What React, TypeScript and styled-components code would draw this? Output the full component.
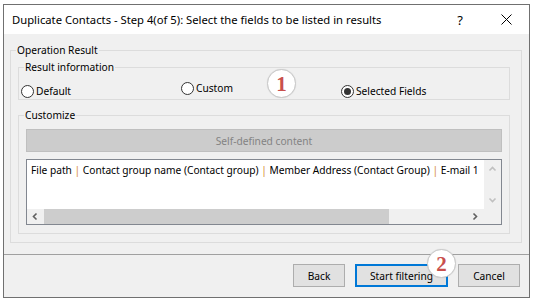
import React from "react";
import styled, { createGlobalStyle } from "styled-components";

const Global = createGlobalStyle`
  html, body { margin: 0; padding: 0; background: #ffffff; }
  body { font-family: "Noto Sans", "Liberation Sans", sans-serif; font-size: 10.2px; color: #000; }
  * { box-sizing: border-box; }
`;

const Window = styled.div`
  position: relative;
  margin: 4px 0 0 3px;
  width: 527px;
  height: 294px;
  border: 1px solid #707070;
  background: #f0f0f0;
  display: flex;
  flex-direction: column;
`;

const TitleBar = styled.div`
  height: 29px;
  background: #ffffff;
  display: flex;
  align-items: center;
  padding-left: 8px;
  flex: none;
`;

const Title = styled.div`
  flex: 1;
  font-size: 11.25px;
  line-height: 16px;
  white-space: nowrap;
`;

const CaptionButton = styled.div`
  width: 46px;
  height: 29px;
  display: flex;
  align-items: center;
  justify-content: center;
  font-size: 13px;
  color: #000;
`;

const Body = styled.div`
  flex: 1;
  padding: 8px 7px 11px 6px;
  display: flex;
  flex-direction: column;
`;

const Group = styled.fieldset<{ $pad: string; $gap?: number }>`
  margin: 0 0 ${(p) => p.$gap || 0}px 0;
  min-width: 0;
  border: 1px solid #dcdcdc;
  padding: ${(p) => p.$pad};
  display: flex;
  flex-direction: column;
`;

const Legend = styled.legend<{ $offset: number }>`
  padding: 0 1px;
  margin-left: ${(p) => p.$offset}px;
  line-height: 16px;
  color: #000;
`;

const RadioRow = styled.div`
  display: grid;
  grid-template-columns: repeat(3, 160px);
  padding: 8px 0 0 1px;
  height: 24px;
`;

const RadioOption = styled.div<{ $raise?: number }>`
  display: flex;
  align-items: center;
  gap: 2px;
  height: 16px;
  margin-top: ${(p) => -(p.$raise || 0)}px;
  white-space: nowrap;
`;

const RadioCircle = styled.span<{ $checked?: boolean }>`
  width: 13px;
  height: 13px;
  border-radius: 50%;
  border: 1px solid #333333;
  background: #ffffff;
  display: flex;
  align-items: center;
  justify-content: center;
  &::after {
    content: "";
    width: 7px;
    height: 7px;
    border-radius: 50%;
    background: #333333;
    display: ${(p) => (p.$checked ? "block" : "none")};
  }
`;

const SelfButton = styled.div`
  height: 23px;
  background: #cccccc;
  border: 1px solid #bfbfbf;
  color: #838383;
  display: flex;
  align-items: center;
  justify-content: center;
  margin-bottom: 7px;
`;

const ListBox = styled.div`
  height: 66px;
  border: 1px solid #828790;
  display: grid;
  grid-template-columns: 1fr 17px;
  grid-template-rows: 1fr 15px;
  background: #f0f0f0;
`;

const ListText = styled.div`
  background: #ffffff;
  padding: 2px 0 0 4px;
  white-space: nowrap;
  overflow: hidden;
  line-height: 16px;
`;

const Sep = styled.span`
  color: #d4862a;
`;

const VScroll = styled.div`
  display: flex;
  flex-direction: column;
  justify-content: space-between;
  align-items: center;
  padding: 5px 0 4px;
`;

const HScroll = styled.div`
  display: flex;
  align-items: center;
`;

const ArrowBox = styled.div<{ $w: number }>`
  width: ${(p) => p.$w}px;
  height: 15px;
  display: flex;
  align-items: center;
  justify-content: center;
  flex: none;
`;

const Track = styled.div`
  flex: 1;
  height: 15px;
  display: flex;
  align-items: center;
`;

const Thumb = styled.div`
  height: 15px;
  background: #cdcdcd;
`;

const Corner = styled.div`
  background: #f0f0f0;
`;

const Footer = styled.div`
  height: 43px;
  border-top: 1px solid #a0a0a0;
  display: flex;
  justify-content: flex-end;
  align-items: flex-start;
  gap: 10px;
  padding: 9px 9px 0 0;
  flex: none;
`;

const Button = styled.div<{ $w: number; $default?: boolean }>`
  width: ${(p) => p.$w}px;
  height: 23px;
  background: #e1e1e1;
  border: ${(p) => (p.$default ? "2px solid #0078d7" : "1px solid #adadad")};
  display: flex;
  align-items: center;
  justify-content: center;
  white-space: nowrap;
`;

const Badge = styled.div<{ $x: number; $y: number }>`
  position: absolute;
  left: ${(p) => p.$x}px;
  top: ${(p) => p.$y}px;
  width: 29px;
  height: 29px;
  border-radius: 50%;
  background: #ffffff;
  border: 1px solid #c8c8c8;
  box-shadow: 0 0 1px rgba(0, 0, 0, 0.15);
  display: flex;
  align-items: center;
  justify-content: center;
  font-family: "Liberation Serif", "DejaVu Serif", serif;
  font-weight: bold;
  font-size: 21px;
  line-height: 1;
  color: #c9504d;
  padding-top: 1px;
`;

const Chevron = ({ dir, color }: { dir: "up" | "down" | "left" | "right"; color: string }) => {
  const paths: Record<string, string> = {
    up: "M1.5 5.5 L4.5 2.5 L7.5 5.5",
    down: "M1.5 2.5 L4.5 5.5 L7.5 2.5",
    left: "M5.5 1.5 L2.5 4.5 L5.5 7.5",
    right: "M2.5 1.5 L5.5 4.5 L2.5 7.5",
  };
  return (
    <svg width="9" height="9" viewBox="0 0 9 9">
      <path d={paths[dir]} fill="none" stroke={color} strokeWidth="1.6" />
    </svg>
  );
};

const CloseIcon = () => (
  <svg width="11" height="11" viewBox="0 0 11 11">
    <path d="M0.5 0.5 L10.5 10.5 M10.5 0.5 L0.5 10.5" stroke="#000" strokeWidth="1" />
  </svg>
);

export default function App() {
  return (
    <>
      <Global />
      <Window>
        <TitleBar>
          <Title>Duplicate Contacts - Step 4(of 5): Select the fields to be listed in results</Title>
          <CaptionButton>?</CaptionButton>
          <CaptionButton>
            <CloseIcon />
          </CaptionButton>
        </TitleBar>
        <Body>
          <Group $pad="1px 11px 8px 7px">
            <Legend $offset={-2}>Operation Result</Legend>
            <Group $pad="0 1px 0 1px" $gap={7}>
              <Legend $offset={4}>Result information</Legend>
              <RadioRow>
                <RadioOption>
                  <RadioCircle />
                  Default
                </RadioOption>
                <RadioOption $raise={3}>
                  <RadioCircle />
                  Custom
                </RadioOption>
                <RadioOption>
                  <RadioCircle $checked />
                  Selected Fields
                </RadioOption>
              </RadioRow>
            </Group>
            <Group $pad="6px 7px 8px 7px">
              <Legend $offset={-2}>Customize</Legend>
              <SelfButton>Self-defined content</SelfButton>
              <ListBox>
                <ListText>
                  File path <Sep>|</Sep> Contact group name (Contact group) <Sep>|</Sep> Member Address
                  (Contact Group) <Sep>|</Sep> E-mail 1
                </ListText>
                <VScroll>
                  <Chevron dir="up" color="#c0c0c0" />
                  <Chevron dir="down" color="#c0c0c0" />
                </VScroll>
                <HScroll>
                  <ArrowBox $w={17}>
                    <Chevron dir="left" color="#606060" />
                  </ArrowBox>
                  <Track>
                    <Thumb style={{ width: "81.5%" }} />
                  </Track>
                  <ArrowBox $w={17}>
                    <Chevron dir="right" color="#606060" />
                  </ArrowBox>
                </HScroll>
                <Corner />
              </ListBox>
            </Group>
          </Group>
        </Body>
        <Footer>
          <Button $w={52}>Back</Button>
          <Button $w={93} $default>
            Start filtering
          </Button>
          <Button $w={62}>Cancel</Button>
        </Footer>
        <Badge $x={263} $y={64}>1</Badge>
        <Badge $x={423} $y={244}>2</Badge>
      </Window>
    </>
  );
}
